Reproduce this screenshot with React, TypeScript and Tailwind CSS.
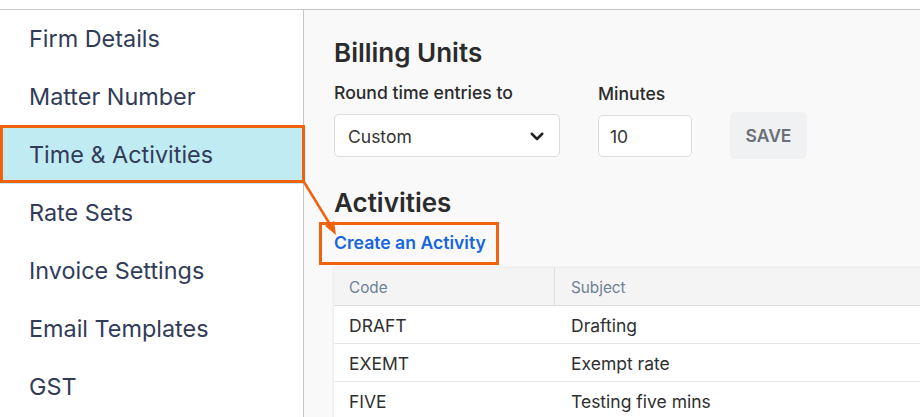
import React from "react";

const NAV = [
  "Firm Details",
  "Matter Number",
  "Time & Activities",
  "Rate Sets",
  "Invoice Settings",
  "Email Templates",
  "GST",
];

const ACTIVITIES = [
  { code: "DRAFT", subject: "Drafting" },
  { code: "EXEMT", subject: "Exempt rate" },
  { code: "FIVE", subject: "Testing five mins" },
];

const App = () => {
  return (
    <div className="relative h-[417px] w-[920px] overflow-hidden bg-white font-['Inter',sans-serif]">
      <div className="h-[10px] border-b border-[#c6c6c6] bg-white" />
      <div className="flex h-[407px]">
        {/* Sidebar */}
        <nav className="w-[304px] shrink-0 border-r border-[#c6c6c6] bg-white">
          {NAV.map((item) => (
            <div
              key={item}
              className={`flex h-[58px] items-center px-[29px] text-[23.4px] text-[#313c58] ${
                item === "Time & Activities" ? "bg-[#c1ebf3]" : ""
              }`}
            >
              {item}
            </div>
          ))}
        </nav>

        {/* Main */}
        <main className="flex-1 overflow-hidden bg-[#f9f9f9] pl-[30px] pt-[27px]">
          <h2 className="text-[26px] leading-[32px] font-semibold text-[#2b2b2b]">Billing Units</h2>
          <div className="mt-[13px] flex items-end gap-[38px]">
            <div>
              <div className="text-[17.6px] leading-[22px] font-medium text-[#2b2b2b]">Round time entries to</div>
              <div className="mt-[10px] flex h-[43px] w-[226px] items-center justify-between rounded-[5px] border border-[#dcdcdc] bg-white pl-[13px] pr-[13px] pt-[3px] text-[17.5px] text-[#333]">
                <span>Custom</span>
                <svg className="-mt-[3px]" width="18" height="18" viewBox="0 0 24 24" fill="none" stroke="#222" strokeWidth="3.4" strokeLinecap="round" strokeLinejoin="round">
                  <path d="M5 9l7 7 7-7" />
                </svg>
              </div>
            </div>
            <div>
              <div className="text-[17.6px] leading-[22px] font-medium text-[#2b2b2b]">Minutes</div>
              <div className="mt-[10px] flex h-[42px] w-[94px] items-center rounded-[5px] border border-[#dcdcdc] bg-white px-[11px] pt-[2px] text-[17.5px] text-[#333]">
                10
              </div>
            </div>
            <button className="mb-[-2px] h-[47px] w-[77px] rounded-[5px] bg-[#f0f1f3] pt-[2px] text-[17.5px] font-semibold text-[#6b6f78]">
              SAVE
            </button>
          </div>

          <h2 className="mt-[30px] text-[26px] leading-[32px] font-semibold text-[#2b2b2b]">Activities</h2>
          <div className="mt-[12px] text-[17.6px] leading-[24px] font-semibold text-[#1766dd]">Create an Activity</div>

          <div className="mt-[13px] w-[700px] bg-white shadow-[0_0_3px_rgba(0,0,0,0.12)]">
            <div className="flex h-[38px] items-center border-b border-[#dedede] bg-[#f4f4f4] text-[15.3px] text-[#6e7f97]">
              <div className="flex h-full w-[221px] items-center border-r border-[#dedede] pl-[15px] pt-[3px]">Code</div>
              <div className="pl-[16px] pt-[3px]">Subject</div>
            </div>
            {ACTIVITIES.map((a) => (
              <div key={a.code} className="flex h-[38px] items-center border-b border-[#e6e6e6] pt-[3px] text-[17.5px] text-[#2f2f2f]">
                <div className="w-[221px] pl-[15px]">{a.code}</div>
                <div className="pl-[16px]">{a.subject}</div>
              </div>
            ))}
          </div>
        </main>
      </div>

      {/* Annotations */}
      <div className="pointer-events-none absolute left-0 top-[125px] h-[58px] w-[305px] border-[3px] border-[#f0620e]" />
      <div className="pointer-events-none absolute left-[319px] top-[222px] h-[43px] w-[180px] border-[3px] border-[#f0620e]" />
      <svg className="pointer-events-none absolute left-0 top-0" width="920" height="417">
        <line x1="304" y1="182" x2="331" y2="226" stroke="#f0620e" strokeWidth="2.5" />
        <polygon points="336,235 325,226 334,221" fill="#f0620e" />
      </svg>
    </div>
  );
};

export default App;
